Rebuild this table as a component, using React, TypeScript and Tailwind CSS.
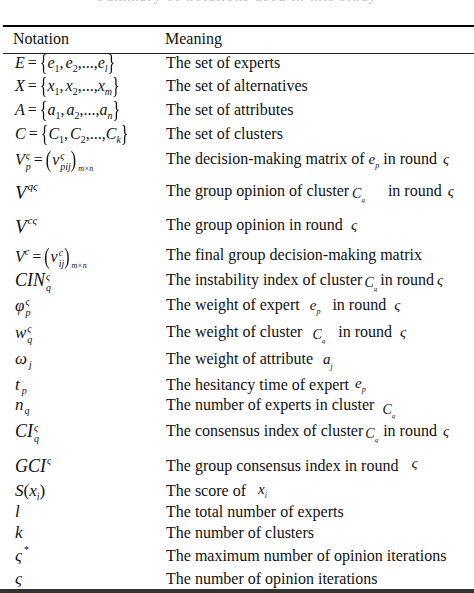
import React from "react";

const Sub = ({ children, cls = "" }: { children: React.ReactNode; cls?: string }) => (
  <span className={`relative top-[4px] text-[10px] leading-none ${cls}`}>{children}</span>
);
const Sup = ({ children, cls = "" }: { children: React.ReactNode; cls?: string }) => (
  <span className={`relative -top-[7px] text-[10px] leading-none ${cls}`}>{children}</span>
);
const SS = ({ sup, sub }: { sup: React.ReactNode; sub: React.ReactNode }) => (
  <span className="inline-flex flex-col align-[6px] text-[10px] leading-[11px] italic ml-[1px]">
    <span>{sup}</span>
    <span>{sub}</span>
  </span>
);
const Br = ({ children }: { children: React.ReactNode }) => (
  <span className="inline-block scale-y-[1.45] not-italic font-light">{children}</span>
);
const Eq = () => <span className="not-italic mx-[3px]">=</span>;
const Cm = () => <span className="not-italic mr-[2px]">,</span>;

const EP = () => (
  <span className="italic text-[15px]">
    e<span className="relative top-[4px] text-[8px]">p</span>
  </span>
);
const CQ = () => (
  <span className="italic text-[14px] relative top-[2px]">
    C<span className="relative top-[4px] text-[7px]">q</span>
  </span>
);
const SIG = ({ cls = "" }: { cls?: string }) => <span className={`italic text-[15px] ${cls}`}>ς</span>;

type Row = { h: string; f: React.ReactNode; m: React.ReactNode; fcls?: string };

const rows: Row[] = [
  {
    h: "h-[23px]",
    f: (
      <span className="italic text-[16px]">
        E<Eq />
        <Br>{"{"}</Br>e<Sub cls="not-italic">1</Sub>
        <Cm />e<Sub cls="not-italic">2</Sub>
        <span className="not-italic">,...,</span>e<Sub>l</Sub>
        <Br>{"}"}</Br>
      </span>
    ),
    m: <span>The set of experts</span>,
  },
  {
    h: "h-[24px]",
    f: (
      <span className="italic text-[16px]">
        X<Eq />
        <Br>{"{"}</Br>x<Sub cls="not-italic">1</Sub>
        <Cm />x<Sub cls="not-italic">2</Sub>
        <span className="not-italic">,...,</span>x<Sub>m</Sub>
        <Br>{"}"}</Br>
      </span>
    ),
    m: <span>The set of alternatives</span>,
  },
  {
    h: "h-[24px]",
    f: (
      <span className="italic text-[16px]">
        A<Eq />
        <Br>{"{"}</Br>a<Sub cls="not-italic">1</Sub>
        <Cm />a<Sub cls="not-italic">2</Sub>
        <span className="not-italic">,...,</span>a<Sub>n</Sub>
        <Br>{"}"}</Br>
      </span>
    ),
    m: <span>The set of attributes</span>,
  },
  {
    h: "h-[25px]",
    f: (
      <span className="italic text-[16px]">
        C<Eq />
        <Br>{"{"}</Br>C<Sub cls="not-italic">1</Sub>
        <Cm />C<Sub cls="not-italic">2</Sub>
        <span className="not-italic">,...,</span>C<Sub>k</Sub>
        <Br>{"}"}</Br>
      </span>
    ),
    m: <span>The set of clusters</span>,
  },
  {
    h: "h-[32px]",
    f: (
      <span className="italic text-[16px]">
        V<SS sup="ς" sub="p" />
        <Eq />
        <Br>(</Br>
        <span className="ml-[1px]">v</span>
        <SS sup="ς" sub="pij" />
        <Br>)</Br>
        <span className="relative top-[6px] text-[8px] leading-none ml-[2px]">m×n</span>
      </span>
    ),
    m: (
      <span>
        The decision-making matrix of<span className="ml-[4px]"><EP /></span>
        <span className="ml-[4px]">in round</span>
        <span className="ml-[6px]"><SIG /></span>
      </span>
    ),
  },
  {
    h: "h-[34px]",
    fcls: "relative top-[2px]",
    f: (
      <span className="italic text-[19px]">
        V<Sup cls="-top-[9px] ml-[1px] text-[11px]">qς</Sup>
      </span>
    ),
    m: (
      <span>
        The group opinion of cluster<span className="ml-[3px]"><CQ /></span>
        <span className="ml-[23px]">in round</span>
        <span className="ml-[6px]"><SIG /></span>
      </span>
    ),
  },
  {
    h: "h-[30px]",
    fcls: "relative top-[2px]",
    f: (
      <span className="italic text-[19px]">
        V<Sup cls="-top-[9px] ml-[1px] text-[11px]">cς</Sup>
      </span>
    ),
    m: (
      <span>
        The group opinion in round<span className="ml-[8px]"><SIG /></span>
      </span>
    ),
  },
  {
    h: "h-[25px]",
    fcls: "relative top-[1px]",
    f: (
      <span className="italic text-[16px]">
        V<Sup>c</Sup>
        <Eq />
        <Br>(</Br>
        <span className="ml-[1px]">v</span>
        <SS sup="c" sub="ij" />
        <Br>)</Br>
        <span className="relative top-[6px] text-[8px] leading-none ml-[2px]">m×n</span>
      </span>
    ),
    m: <span>The final group decision-making matrix</span>,
  },
  {
    h: "h-[25px]",
    f: (
      <span className="italic text-[18px]">
        CIN
        <SS sup="ς" sub="q" />
      </span>
    ),
    m: (
      <span>
        The instability index of cluster<span className="ml-[2px]"><CQ /></span>
        <span className="ml-[3px]">in round</span>
        <span className="ml-[3px]"><SIG /></span>
      </span>
    ),
  },
  {
    h: "h-[27px]",
    f: (
      <span className="italic text-[17px]">
        φ
        <SS sup="ς" sub="p" />
      </span>
    ),
    m: (
      <span>
        The weight of expert<span className="ml-[10px]"><EP /></span>
        <span className="ml-[12px]">in round</span>
        <span className="ml-[8px]"><SIG /></span>
      </span>
    ),
  },
  {
    h: "h-[27px]",
    f: (
      <span className="italic text-[17px]">
        w
        <SS sup="ς" sub="q" />
      </span>
    ),
    m: (
      <span>
        The weight of cluster<span className="ml-[10px]"><CQ /></span>
        <span className="ml-[13px]">in round</span>
        <span className="ml-[8px]"><SIG /></span>
      </span>
    ),
  },
  {
    h: "h-[26px]",
    f: (
      <span className="italic text-[17px]">
        ω<Sub cls="ml-[2px]">j</Sub>
      </span>
    ),
    m: (
      <span>
        The weight of attribute
        <span className="ml-[10px] italic text-[15px]">
          a<span className="relative top-[5px] text-[8px]">j</span>
        </span>
      </span>
    ),
  },
  {
    h: "h-[20px]",
    f: (
      <span className="italic text-[17px]">
        t<Sub cls="ml-[2px]">p</Sub>
      </span>
    ),
    m: (
      <span>
        The hesitancy time of expert<span className="ml-[6px] relative -top-[2px]"><EP /></span>
      </span>
    ),
  },
  {
    h: "h-[26px]",
    f: (
      <span className="italic text-[17px]">
        n<Sub cls="ml-[1px]">q</Sub>
      </span>
    ),
    m: (
      <span>
        The number of experts in cluster<span className="ml-[8px] relative top-[2px]"><CQ /></span>
      </span>
    ),
  },
  {
    h: "h-[35px]",
    f: (
      <span className="italic text-[18px]">
        CI
        <SS sup="ς" sub="q" />
      </span>
    ),
    m: (
      <span>
        The consensus index of cluster<span className="ml-[2px]"><CQ /></span>
        <span className="ml-[5px]">in round</span>
        <span className="ml-[6px]"><SIG /></span>
      </span>
    ),
  },
  {
    h: "h-[25px]",
    f: (
      <span className="italic text-[18px]">
        GCI<Sup cls="-top-[8px] ml-[1px]">ς</Sup>
      </span>
    ),
    m: (
      <span>
        The group consensus index in round
        <span className="ml-[13px] relative -top-[3px]"><SIG /></span>
      </span>
    ),
  },
  {
    h: "h-[21px]",
    f: (
      <span className="italic text-[17px]">
        S<span className="not-italic">(</span>x<Sub>i</Sub>
        <span className="not-italic">)</span>
      </span>
    ),
    m: (
      <span>
        The score of
        <span className="ml-[12px] italic text-[15px] relative -top-[2px]">
          x<span className="relative top-[4px] text-[8px]">i</span>
        </span>
      </span>
    ),
  },
  {
    h: "h-[21px]",
    f: <span className="italic text-[17px]">l</span>,
    m: <span>The total number of experts</span>,
  },
  {
    h: "h-[23px]",
    f: <span className="italic text-[17px]">k</span>,
    m: <span>The number of clusters</span>,
  },
  {
    h: "h-[23px]",
    f: (
      <span className="italic text-[17px]">
        ς<Sup cls="not-italic ml-[2px] -top-[8px]">*</Sup>
      </span>
    ),
    m: <span>The maximum number of opinion iterations</span>,
  },
  {
    h: "h-[19px]",
    f: <span className="italic text-[17px]">ς</span>,
    m: <span>The number of opinion iterations</span>,
  },
];

export default function App() {
  return (
    <div className="w-[474px] h-[593px] bg-white overflow-hidden text-[#111] font-['Liberation_Serif','Times_New_Roman',serif] text-[16px] leading-[18px]">
      <div className="h-[25px] overflow-hidden">
        <div className="-mt-[11px] text-center text-[15px] leading-[15px] tracking-[1px] text-[#c4c4c4] blur-[0.5px]">
          Summary of notations used in this study
        </div>
      </div>
      <div className="ml-[3px] h-[2px] bg-black" />
      <div className="flex h-[26px] pt-[3px]">
        <div className="w-[166px] pl-[13px]">Notation</div>
        <div className="flex-1 -ml-[1px]">Meaning</div>
      </div>
      <div className="ml-[3px] h-[1px] bg-[#222]" />
      {rows.map((r, i) => (
        <div key={i} className={`flex ${r.h} whitespace-nowrap`}>
          <div className="w-[166px] pl-[15px]">
            <div className={r.fcls ?? ""}>{r.f}</div>
          </div>
          <div className="flex-1">{r.m}</div>
        </div>
      ))}
      <div className="h-[4px] bg-[#333]" />
    </div>
  );
}
